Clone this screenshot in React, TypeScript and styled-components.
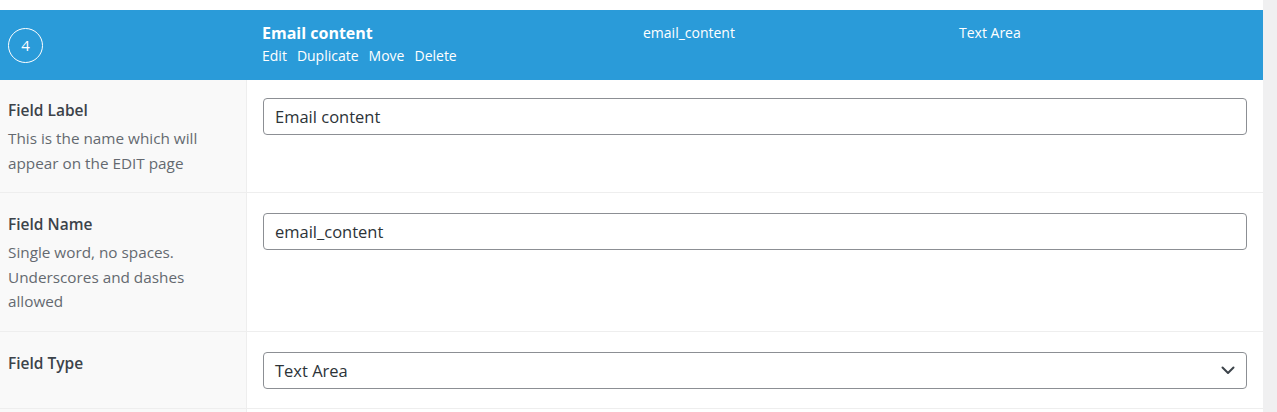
import React from 'react'
import styled, { createGlobalStyle } from 'styled-components'

const GlobalStyle = createGlobalStyle`
  html, body {
    margin: 0;
    padding: 0;
    background: #f0f0f1;
    font-family: 'Open Sans', 'Noto Sans', sans-serif;
  }
`

const Page = styled.div`
  display: flex;
  height: 412px;
  overflow: hidden;
`

const Panel = styled.div`
  width: 1263px;
  background: #fff;
  padding-top: 10px;
`

const Handle = styled.div`
  display: flex;
  height: 70px;
  background: #2a9bd9;
  color: #fff;
`

const OrderCell = styled.div`
  width: 247px;
  padding-left: 8px;
  display: flex;
  align-items: center;
  box-sizing: border-box;
`

const Circle = styled.span`
  width: 35px;
  height: 35px;
  border: 1px solid #fff;
  border-radius: 50%;
  box-sizing: border-box;
  display: flex;
  align-items: center;
  justify-content: center;
  font-size: 15px;
`

const HandleCell = styled.div<{ $width?: number }>`
  ${(p) => (p.$width ? `width: ${p.$width}px;` : 'flex: 1;')}
  box-sizing: border-box;
  padding: 12px 15px 0;
  font-size: 14px;
  line-height: 22px;
`

const Title = styled.div`
  font-size: 16px;
  font-weight: 700;
  line-height: 22px;
`

const Actions = styled.div`
  display: flex;
  gap: 10px;
  margin-top: 2px;
  line-height: 20px;
  font-size: 14px;
`

const Row = styled.div<{ $first?: boolean }>`
  display: flex;
  border-top: ${(p) => (p.$first ? 'none' : '1px solid #eeeeee')};
  --pad: ${(p) => (p.$first ? '20px' : '21px')};
  --inpad: ${(p) => (p.$first ? '18px' : '20px')};
`

const LabelCol = styled.div`
  width: 247px;
  min-height: 40px;
  box-sizing: border-box;
  background: #f9f9f9;
  border-right: 1px solid #eeeeee;
  padding: var(--pad) 8px 17px;
`

const FieldLabel = styled.div`
  font-size: 15.5px;
  font-weight: 600;
  line-height: 20px;
  color: #3c434a;
`

const Description = styled.div`
  margin-top: 6px;
  font-size: 15.3px;
  line-height: 24.5px;
  color: #646970;
`

const InputCol = styled.div`
  flex: 1;
  padding: var(--inpad) 16px 19px 16px;
`

const TextInput = styled.input`
  display: block;
  width: 100%;
  height: 37px;
  box-sizing: border-box;
  border: 1px solid #8c8f94;
  border-radius: 4px;
  padding: 0 11px;
  font-family: inherit;
  font-size: 16.5px;
  color: #2c3338;
  background: #fff;
  outline: none;
`

const SelectBox = styled.div`
  display: flex;
  align-items: center;
  justify-content: space-between;
  height: 37px;
  box-sizing: border-box;
  border: 1px solid #8c8f94;
  border-radius: 4px;
  padding: 0 11px;
  font-size: 16.5px;
  color: #2c3338;
`

const Chevron = () => (
  <svg width="14" height="9" viewBox="0 0 14 9" fill="none">
    <path d="M1.5 1.5 7 7l5.5-5.5" stroke="#3c434a" strokeWidth="2" strokeLinecap="round" strokeLinejoin="round" />
  </svg>
)

export default function App() {
  return (
    <Page>
      <GlobalStyle />
      <Panel>
        <Handle>
          <OrderCell>
            <Circle>4</Circle>
          </OrderCell>
          <HandleCell $width={381}>
            <Title>Email content</Title>
            <Actions>
              <span>Edit</span>
              <span>Duplicate</span>
              <span>Move</span>
              <span>Delete</span>
            </Actions>
          </HandleCell>
          <HandleCell $width={316}>email_content</HandleCell>
          <HandleCell>Text Area</HandleCell>
        </Handle>

        <Row $first>
          <LabelCol>
            <FieldLabel>Field Label</FieldLabel>
            <Description>This is the name which will appear on the EDIT page</Description>
          </LabelCol>
          <InputCol>
            <TextInput defaultValue="Email content" />
          </InputCol>
        </Row>

        <Row>
          <LabelCol>
            <FieldLabel>Field Name</FieldLabel>
            <Description>Single word, no spaces. Underscores and dashes allowed</Description>
          </LabelCol>
          <InputCol>
            <TextInput defaultValue="email_content" />
          </InputCol>
        </Row>

        <Row>
          <LabelCol>
            <FieldLabel>Field Type</FieldLabel>
          </LabelCol>
          <InputCol>
            <SelectBox>
              <span>Text Area</span>
              <Chevron />
            </SelectBox>
          </InputCol>
        </Row>

        <Row>
          <LabelCol />
        </Row>
      </Panel>
    </Page>
  )
}
